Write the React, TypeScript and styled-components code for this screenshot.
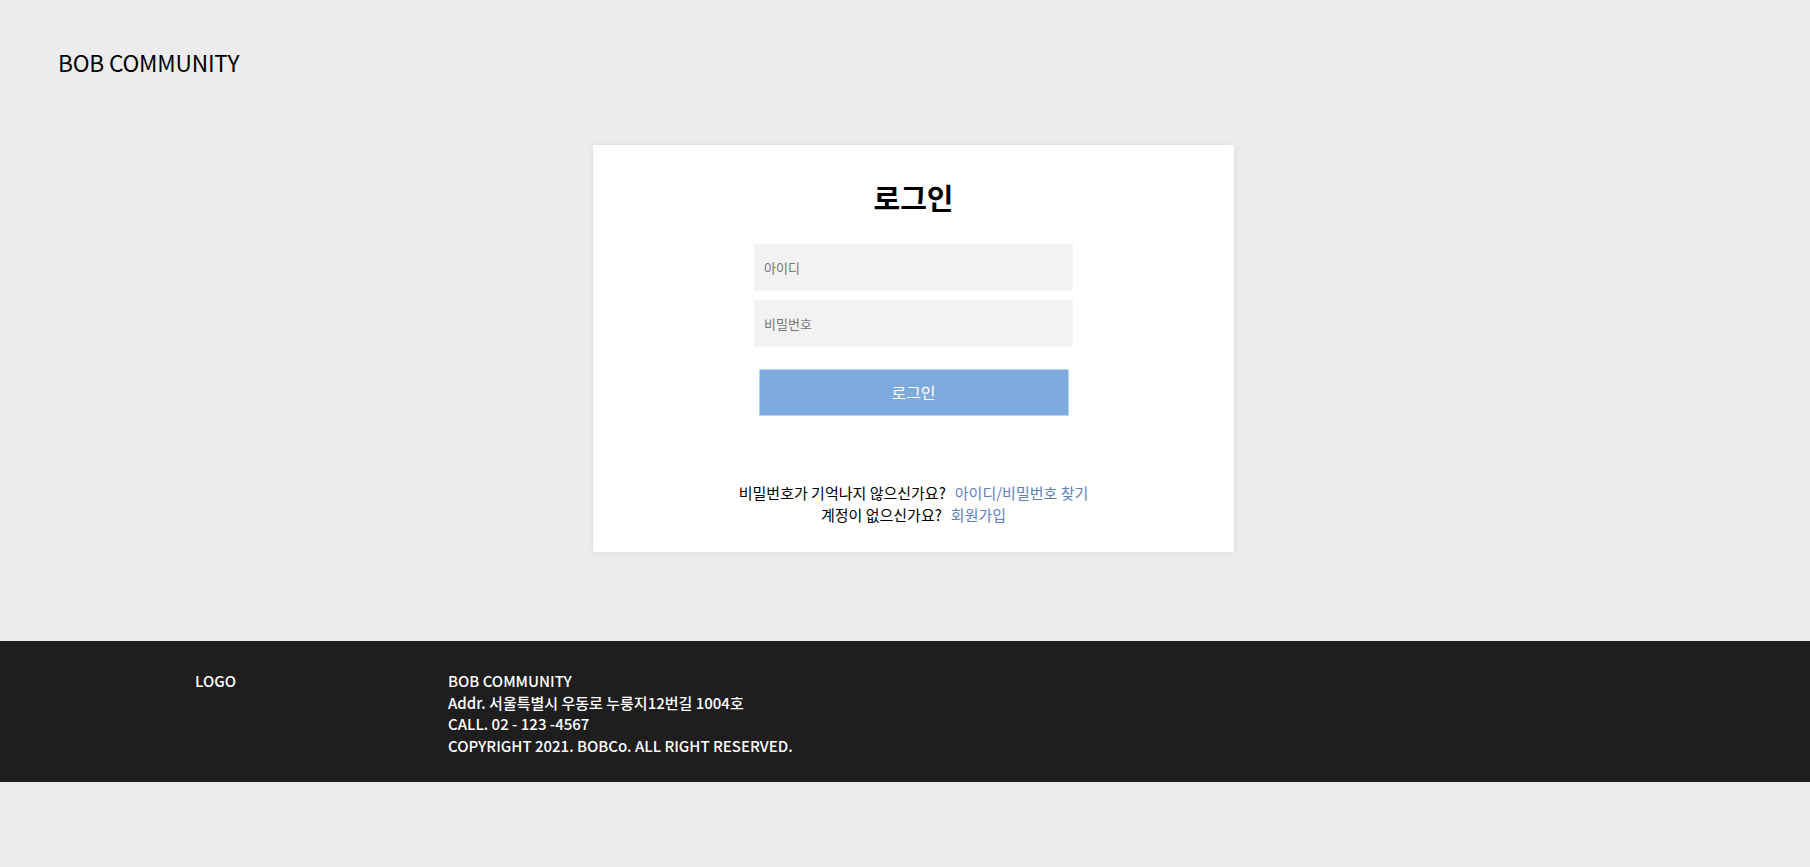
import React from "react";
import styled, { createGlobalStyle } from "styled-components";

const Global = createGlobalStyle`
  * { box-sizing: border-box; }
  html, body { margin: 0; padding: 0; }
  body {
    background: #ececec;
    font-family: "Noto Sans CJK KR", "Noto Sans", sans-serif;
    color: #000;
  }
`;

const Page = styled.div`
  min-height: 867px;
  display: flex;
  flex-direction: column;
`;

const Header = styled.header`
  height: 145px;
  padding: 47px 58px 0;
`;

const Brand = styled.h1`
  margin: 0;
  font-size: 22.7px;
  font-weight: 400;
  line-height: 32px;
  letter-spacing: -0.2px;
`;

const Main = styled.main`
  display: flex;
  justify-content: center;
  padding-left: 17px;
  padding-bottom: 89px;
`;

const Card = styled.section`
  width: 641px;
  height: 407px;
  background: #fff;
  box-shadow: 0 0 6px rgba(0, 0, 0, 0.08);
  display: flex;
  flex-direction: column;
  align-items: center;
  padding-top: 30px;
`;

const Title = styled.h2`
  margin: 0 0 25px;
  font-size: 29px;
  font-weight: 700;
  line-height: 44px;
`;

const Form = styled.form`
  display: flex;
  flex-direction: column;
  align-items: center;
  gap: 9px;
`;

const Input = styled.input`
  width: 319px;
  height: 47px;
  border: 1px solid #f4f4f4;
  background: #f2f2f2;
  padding: 0 9px;
  font-family: inherit;
  font-size: 13px;
  color: #333;
  outline: none;
  &::placeholder { color: #777; }
`;

const Submit = styled.button`
  margin-top: 13px;
  width: 310px;
  height: 47px;
  border: 1px solid #b9d4ef;
  background: #7eabdd;
  color: #fff;
  font-family: inherit;
  font-size: 16px;
  padding-bottom: 2px;
  cursor: pointer;
`;

const Help = styled.div`
  margin-top: 66px;
  display: flex;
  flex-direction: column;
  align-items: center;
  font-size: 15px;
  line-height: 21.5px;
`;

const HelpLine = styled.p`
  margin: 0;
`;

const Link = styled.a`
  color: #5d80bf;
  text-decoration: none;
  margin-left: 9px;
`;

const Footer = styled.footer`
  height: 141px;
  background: #1e1e1e;
  color: #fff;
  display: flex;
  padding: 29px 0 0 195px;
  font-size: 15px;
  font-weight: 500;
  line-height: 21.5px;
`;

const FooterLogo = styled.div`
  width: 253px;
`;

const FooterInfo = styled.div`
  display: flex;
  flex-direction: column;
`;

export default function App() {
  return (
    <>
      <Global />
      <Page>
        <Header>
          <Brand>BOB COMMUNITY</Brand>
        </Header>
        <Main>
          <Card>
            <Title>로그인</Title>
            <Form onSubmit={(e) => e.preventDefault()}>
              <Input type="text" placeholder="아이디" />
              <Input type="password" placeholder="비밀번호" />
              <Submit type="submit">로그인</Submit>
            </Form>
            <Help>
              <HelpLine>
                비밀번호가 기억나지 않으신가요?
                <Link href="#">아이디/비밀번호 찾기</Link>
              </HelpLine>
              <HelpLine>
                계정이 없으신가요?
                <Link href="#">회원가입</Link>
              </HelpLine>
            </Help>
          </Card>
        </Main>
        <Footer>
          <FooterLogo>LOGO</FooterLogo>
          <FooterInfo>
            <span>BOB COMMUNITY</span>
            <span>Addr. 서울특별시 우동로 누룽지12번길 1004호</span>
            <span>CALL. 02 - 123 -4567</span>
            <span>COPYRIGHT 2021. BOBCo. ALL RIGHT RESERVED.</span>
          </FooterInfo>
        </Footer>
      </Page>
    </>
  );
}
